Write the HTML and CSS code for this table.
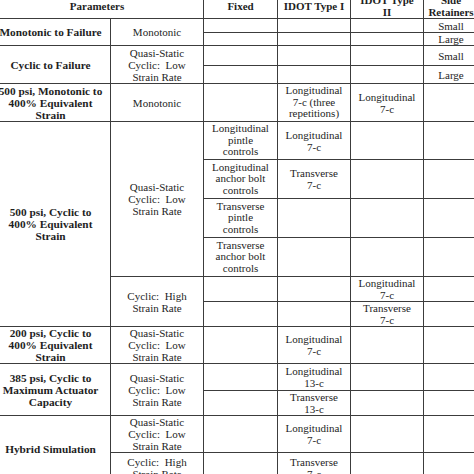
FILE: index.html
```html
<!DOCTYPE html>
<html>
<head>
<meta charset="utf-8">
<link rel="stylesheet" href="styles.css">
</head>
<body>
<table class="grid">
  <colgroup>
    <col class="c-param">
    <col class="c-mode">
    <col class="c-fixed">
    <col class="c-t1">
    <col class="c-t2">
    <col class="c-side">
  </colgroup>
  <thead>
    <tr class="h-head">
      <th colspan="2">Parameters</th>
      <th>Fixed</th>
      <th>IDOT Type I</th>
      <th>IDOT Type<br>II</th>
      <th>Side<br>Retainers</th>
    </tr>
  </thead>
  <tbody>
    <tr class="h14">
      <td rowspan="2" class="b">Monotonic to Failure</td>
      <td rowspan="2">Monotonic</td>
      <td></td><td></td><td></td>
      <td>Small</td>
    </tr>
    <tr class="h12">
      <td></td><td></td><td></td>
      <td>Large</td>
    </tr>
    <tr class="h20">
      <td rowspan="2" class="b">Cyclic to Failure</td>
      <td rowspan="2">Quasi-Static<br>Cyclic:&nbsp; Low<br>Strain Rate</td>
      <td></td><td></td><td></td>
      <td>Small</td>
    </tr>
    <tr class="h18">
      <td></td><td></td><td></td>
      <td>Large</td>
    </tr>
    <tr class="h38">
      <td class="b">500 psi, Monotonic to<br>400% Equivalent<br>Strain</td>
      <td>Monotonic</td>
      <td></td>
      <td class="tight">Longitudinal<br>7-c (three<br>repetitions)</td>
      <td>Longitudinal<br>7-c</td>
      <td></td>
    </tr>
    <tr class="h38">
      <td rowspan="6" class="b">500 psi, Cyclic to<br>400% Equivalent<br>Strain</td>
      <td rowspan="4">Quasi-Static<br>Cyclic:&nbsp; Low<br>Strain Rate</td>
      <td class="tight">Longitudinal<br>pintle<br>controls</td>
      <td>Longitudinal<br>7-c</td>
      <td></td><td></td>
    </tr>
    <tr class="h39">
      <td class="tight">Longitudinal<br>anchor bolt<br>controls</td>
      <td>Transverse<br>7-c</td>
      <td></td><td></td>
    </tr>
    <tr class="h39">
      <td class="tight">Transverse<br>pintle<br>controls</td>
      <td></td><td></td><td></td>
    </tr>
    <tr class="h39">
      <td class="tight">Transverse<br>anchor bolt<br>controls</td>
      <td></td><td></td><td></td>
    </tr>
    <tr class="h25">
      <td rowspan="2">Cyclic:&nbsp; High<br>Strain Rate</td>
      <td></td><td></td>
      <td>Longitudinal<br>7-c</td>
      <td></td>
    </tr>
    <tr class="h24">
      <td></td><td></td>
      <td>Transverse<br>7-c</td>
      <td></td>
    </tr>
    <tr class="h37">
      <td class="b">200 psi, Cyclic to<br>400% Equivalent<br>Strain</td>
      <td>Quasi-Static<br>Cyclic:&nbsp; Low<br>Strain Rate</td>
      <td></td>
      <td>Longitudinal<br>7-c</td>
      <td></td><td></td>
    </tr>
    <tr class="h27">
      <td rowspan="2" class="b">385 psi, Cyclic to<br>Maximum Actuator<br>Capacity</td>
      <td rowspan="2">Quasi-Static<br>Cyclic:&nbsp; Low<br>Strain Rate</td>
      <td></td>
      <td>Longitudinal<br>13-c</td>
      <td></td><td></td>
    </tr>
    <tr class="h25">
      <td></td>
      <td>Transverse<br>13-c</td>
      <td></td><td></td>
    </tr>
    <tr class="h37">
      <td rowspan="2" class="b">Hybrid Simulation</td>
      <td>Quasi-Static<br>Cyclic:&nbsp; Low<br>Strain Rate</td>
      <td></td>
      <td>Longitudinal<br>7-c</td>
      <td></td><td></td>
    </tr>
    <tr class="h30">
      <td>Cyclic:&nbsp; High<br>Strain Rate</td>
      <td></td>
      <td>Transverse<br>7-c</td>
      <td></td><td></td>
    </tr>
  </tbody>
</table>
</body>
</html>
```
FILE: styles.css
```css
html, body {
  margin: 0;
  padding: 0;
  background: #ffffff;
  overflow: hidden;
}

body {
  width: 474px;
  height: 474px;
  font-family: "Liberation Serif", "Times New Roman", serif;
  font-size: 11px;
  line-height: 12px;
  color: #1e1e1e;
}

.grid {
  margin: -7px 0 0 -10px;
  border-collapse: collapse;
  table-layout: fixed;
  width: 488px;
}

.c-param { width: 120px; }
.c-mode { width: 93px; }
.c-fixed { width: 74px; }
.c-t1 { width: 73px; }
.c-t2 { width: 73px; }
.c-side { width: 55px; }

.grid th,
.grid td {
  border: 1px solid #3c3c3c;
  padding: 0 1px;
  text-align: center;
  vertical-align: middle;
  overflow: hidden;
}

.grid th {
  font-weight: bold;
  font-size: 11px;
}

.grid td.b {
  font-weight: bold;
  font-size: 11.3px;
}

.grid td.tight {
  line-height: 11.6px;
}

.h-head { height: 23.5px; }
.h12 { height: 12px; }
.h14 { height: 14px; }
.h18 { height: 18px; }
.h20 { height: 20px; }
.h24 { height: 24px; }
.h25 { height: 25px; }
.h27 { height: 27px; }
.h30 { height: 30px; }
.h37 { height: 37px; }
.h38 { height: 38px; }
.h39 { height: 39px; }
```
